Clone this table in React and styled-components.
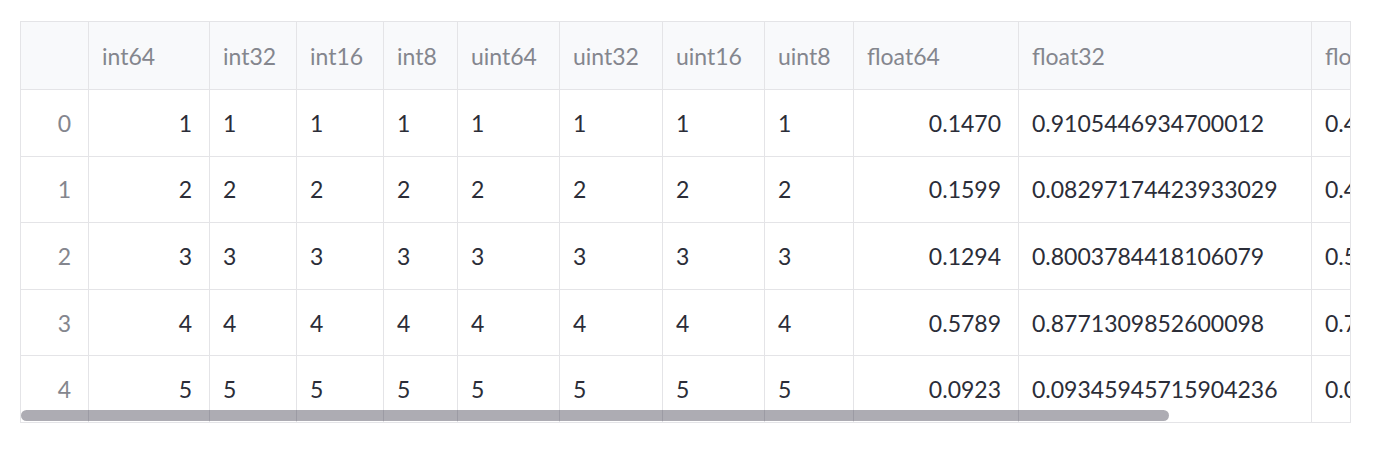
import React from "react";
import styled, { createGlobalStyle } from "styled-components";

const GlobalStyle = createGlobalStyle`
  html, body {
    margin: 0;
    padding: 0;
    background: #ffffff;
  }
  body {
    font-family: Lato, "Noto Sans", sans-serif;
  }
`;

const COLUMNS = [
  { key: "idx", label: "", width: 68 },
  { key: "int64", label: "int64", width: 121, align: "right" },
  { key: "int32", label: "int32", width: 87 },
  { key: "int16", label: "int16", width: 87 },
  { key: "int8", label: "int8", width: 74 },
  { key: "uint64", label: "uint64", width: 102 },
  { key: "uint32", label: "uint32", width: 103 },
  { key: "uint16", label: "uint16", width: 102 },
  { key: "uint8", label: "uint8", width: 89 },
  { key: "float64", label: "float64", width: 165, align: "right" },
  { key: "float32", label: "float32", width: 293 },
  { key: "float16", label: "float16", width: 200 },
];

const F64 = ["0.1470", "0.1599", "0.1294", "0.5789", "0.0923"];
const F32 = [
  "0.9105446934700012",
  "0.08297174423933029",
  "0.8003784418106079",
  "0.8771309852600098",
  "0.09345945715904236",
];
const F16 = ["0.4512", "0.4375", "0.5293", "0.7402", "0.0625"];

const ROWS = [0, 1, 2, 3, 4].map((i) => ({
  idx: String(i),
  int64: String(i + 1),
  int32: String(i + 1),
  int16: String(i + 1),
  int8: String(i + 1),
  uint64: String(i + 1),
  uint32: String(i + 1),
  uint16: String(i + 1),
  uint8: String(i + 1),
  float64: F64[i],
  float32: F32[i],
  float16: F16[i],
}));

const template = COLUMNS.map((c) => `${c.width}px`).join(" ");

const Page = styled.div`
  padding: 21px 0 0 20px;
`;

const Frame = styled.div`
  position: relative;
  box-sizing: border-box;
  width: 1331px;
  height: 402px;
  border: 1px solid #e4e4e7;
  overflow: hidden;
`;

const Table = styled.div`
  display: flex;
  flex-direction: column;
  height: 100%;
`;

const Row = styled.div`
  display: grid;
  grid-template-columns: ${template};
  box-sizing: border-box;
  border-bottom: 1px solid #e4e4e7;
  flex: ${(p) => (p.$header ? "0 0 68px" : "1 1 0")};
  background: ${(p) => (p.$header ? "#f8f9fb" : "#ffffff")};
  &:last-child {
    border-bottom: none;
  }
`;

const Cell = styled.div`
  box-sizing: border-box;
  display: flex;
  align-items: center;
  justify-content: ${(p) => (p.$align === "right" ? "flex-end" : "flex-start")};
  padding: 0 17px 0 13px;
  border-right: 1px solid #e4e4e7;
  font-size: 23px;
  white-space: nowrap;
  overflow: hidden;
  color: ${(p) => (p.$muted ? "#84868e" : "#2b2d38")};
`;

const Scrollbar = styled.div`
  position: absolute;
  left: 0;
  bottom: 1px;
  width: 1148px;
  height: 11px;
  border-radius: 6px;
  background: rgba(40, 38, 55, 0.38);
`;

export default function App() {
  return (
    <>
      <GlobalStyle />
      <Page>
        <Frame>
          <Table>
            <Row $header>
              {COLUMNS.map((c) => (
                <Cell key={c.key} $muted>
                  {c.label}
                </Cell>
              ))}
            </Row>
            {ROWS.map((r) => (
              <Row key={r.idx}>
                {COLUMNS.map((c) => (
                  <Cell
                    key={c.key}
                    $align={c.key === "idx" ? "right" : c.align}
                    $muted={c.key === "idx"}
                  >
                    {r[c.key]}
                  </Cell>
                ))}
              </Row>
            ))}
          </Table>
          <Scrollbar />
        </Frame>
      </Page>
    </>
  );
}
